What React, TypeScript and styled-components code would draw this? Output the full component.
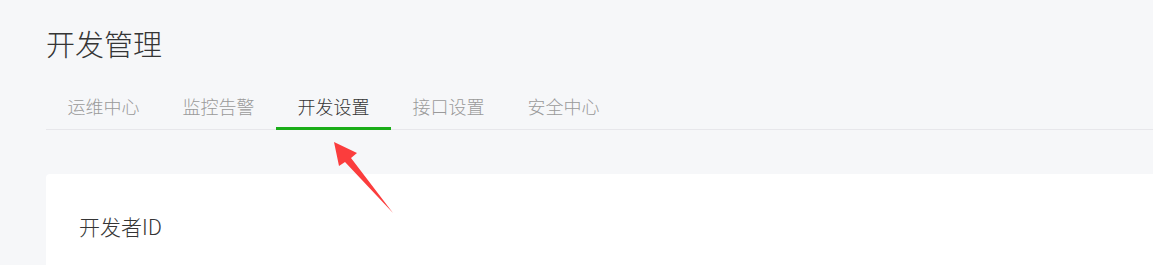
import React from 'react'
import styled, { createGlobalStyle } from 'styled-components'

const GlobalStyle = createGlobalStyle`
  html, body {
    margin: 0;
    padding: 0;
    background: #f6f7f9;
    font-family: "Noto Sans CJK SC", "Noto Sans", sans-serif;
  }
`

const Page = styled.div`
  position: relative;
  width: 100vw;
  height: 100vh;
  overflow: hidden;
  padding-left: 46px;
  box-sizing: border-box;
`

const Title = styled.h1`
  margin: 0;
  padding-top: 24px;
  font-size: 29px;
  line-height: 38px;
  font-weight: 300;
  color: #353535;
`

const TabBar = styled.div`
  display: flex;
  margin-top: 21px;
  border-bottom: 1px solid #e7e7eb;
`

const Tab = styled.div<{ $active?: boolean }>`
  position: relative;
  padding: 0 21.5px;
  font-size: 18px;
  line-height: 46px;
  font-weight: 300;
  color: ${(p) => (p.$active ? '#353535' : '#9a9a9a')};
  cursor: pointer;

  &::after {
    content: '';
    display: ${(p) => (p.$active ? 'block' : 'none')};
    position: absolute;
    left: 0;
    right: 0;
    bottom: -1px;
    height: 3px;
    background: #1aad19;
  }
`

const Card = styled.div`
  margin-top: 44px;
  background: #fff;
  border-radius: 4px 0 0 0;
  padding: 38px 33px 40px;
  min-height: 200px;
`

const FieldLabel = styled.div`
  font-size: 21px;
  line-height: 28px;
  font-weight: 300;
  color: #353535;
`

const Arrow = styled.svg`
  position: absolute;
  left: 0;
  top: 0;
  pointer-events: none;
`

const tabs = ['运维中心', '监控告警', '开发设置', '接口设置', '安全中心']

export default function App() {
  return (
    <>
      <GlobalStyle />
      <Page>
        <Title>开发管理</Title>
        <TabBar>
          {tabs.map((t) => (
            <Tab key={t} $active={t === '开发设置'}>
              {t}
            </Tab>
          ))}
        </TabBar>
        <Card>
          <FieldLabel>开发者ID</FieldLabel>
        </Card>
        <Arrow width="1153" height="265">
          <polygon
            points="334,142 357,153 351,158 393,213 345,162 339,166"
            fill="#fb3d3d"
          />
        </Arrow>
      </Page>
    </>
  )
}
